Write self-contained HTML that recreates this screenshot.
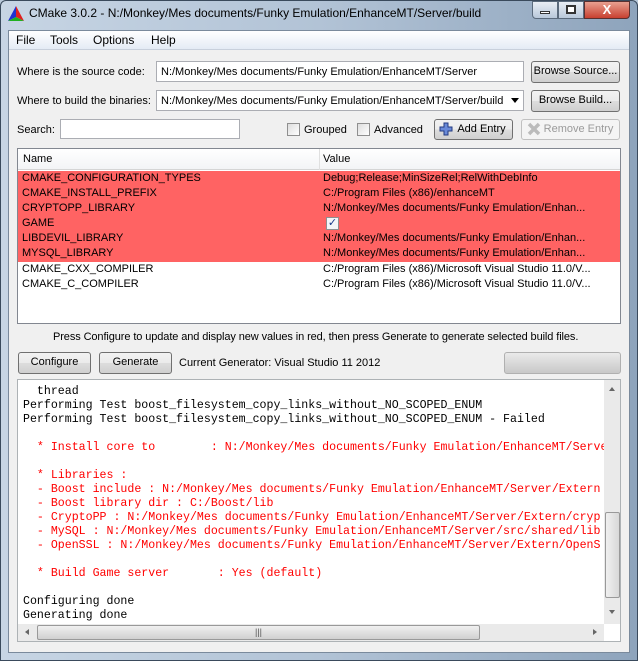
<!DOCTYPE html>
<html><head><meta charset="utf-8"><style>
*{margin:0;padding:0;box-sizing:border-box}
body{width:638px;height:661px;position:relative;overflow:hidden;background:#b9c9da;font-family:"Liberation Sans",sans-serif;font-size:11px;color:#000;white-space:nowrap}
.a{position:absolute}
.frame{left:0;top:0;width:638px;height:661px;background:linear-gradient(90deg,#c7d5e4 0%,#b2c3d6 50%,#8ea4bc 100%);border:1px solid #3a4a5c;border-radius:6px 6px 0 0}
.client{left:8px;top:30px;width:622px;height:623px;background:#f0f0f0;border:1px solid #7a8a9c}
.btn{position:absolute;border:1px solid #707070;border-radius:3px;background:linear-gradient(#f2f2f2,#ebebeb 50%,#dddddd 51%,#cfcfcf);text-align:center;font-size:11px;line-height:19px}
.inp{position:absolute;background:#fff;border:1px solid #abadb3;font-size:11px;line-height:18px;padding-left:4px}
.cb{position:absolute;width:13px;height:13px;border:1px solid #8f8f8f;background:linear-gradient(135deg,#ddd,#fff)}
.row{position:absolute;left:0;width:602px;height:15px;line-height:15px;font-size:11px}
.row span{position:absolute;top:0}
.mono{font-family:"Liberation Mono",monospace;font-size:11.6px;line-height:14px;white-space:pre;position:absolute;left:5px}
.r{color:#f00}
</style></head><body>
<div class="a frame"></div>
<svg class="a" style="left:7px;top:5px" width="18" height="18" viewBox="0 0 18 18"><polygon points="9,1 1,16 9,12" fill="#2030d0"/><polygon points="9,1 17,16 9,12" fill="#e02020"/><polygon points="1,16 17,16 9,12" fill="#20b020"/></svg>
<div class="a" style="left:29px;top:6px;font-size:12px;color:#000">CMake 3.0.2 - N:/Monkey/Mes documents/Funky Emulation/EnhanceMT/Server/build</div>
<div class="a" style="left:532px;top:1px;width:26px;height:18px;border:1px solid #5a6a7c;border-radius:0 0 0 4px;background:linear-gradient(#e8eef5,#b8c8da);"></div>
<div class="a" style="left:540px;top:11px;width:10px;height:3px;background:#fff;border:1px solid #333"></div>
<div class="a" style="left:558px;top:1px;width:26px;height:18px;border:1px solid #5a6a7c;background:linear-gradient(#e8eef5,#b8c8da);"></div>
<div class="a" style="left:566px;top:5px;width:10px;height:9px;border:2px solid #333;background:#fff"></div>
<div class="a" style="left:584px;top:1px;width:46px;height:18px;border:1px solid #5a3030;border-radius:0 0 4px 0;background:linear-gradient(#e8a090,#c84030);color:#fff;font-weight:bold;text-align:center;line-height:16px;font-size:13px">X</div>
<div class="a client"></div>
<div class="a" style="left:9px;top:31px;width:620px;height:19px;background:linear-gradient(#fff,#e4ebf5);border-bottom:1px solid #c8d0dc"></div>
<div class="a" style="left:16px;top:33px;font-size:12px">File</div>
<div class="a" style="left:50px;top:33px;font-size:12px">Tools</div>
<div class="a" style="left:93px;top:33px;font-size:12px">Options</div>
<div class="a" style="left:151px;top:33px;font-size:12px">Help</div>

<div class="a" style="left:17px;top:66px">Where is the source code:</div>
<div class="inp" style="left:156px;top:61px;width:368px;height:21px;padding-top:1px">N:/Monkey/Mes documents/Funky Emulation/EnhanceMT/Server</div>
<div class="btn" style="left:531px;top:61px;width:89px;height:22px">Browse Source...</div>
<div class="a" style="left:17px;top:95px">Where to build the binaries:</div>
<div class="inp" style="left:156px;top:90px;width:368px;height:21px;padding-top:1px">N:/Monkey/Mes documents/Funky Emulation/EnhanceMT/Server/build</div>
<div class="a" style="left:511px;top:98px;width:0;height:0;border-left:4px solid transparent;border-right:4px solid transparent;border-top:5px solid #000"></div>
<div class="btn" style="left:531px;top:90px;width:89px;height:22px">Browse Build...</div>
<div class="a" style="left:17px;top:124px">Search:</div>
<div class="inp" style="left:60px;top:119px;width:180px;height:20px"></div>
<div class="cb" style="left:287px;top:123px"></div><div class="a" style="left:304px;top:124px">Grouped</div>
<div class="cb" style="left:357px;top:123px"></div><div class="a" style="left:374px;top:124px">Advanced</div>
<div class="btn" style="left:434px;top:119px;width:79px;height:21px;padding-left:16px">Add Entry</div>
<svg class="a" style="left:439px;top:122px" width="14" height="14"><path d="M5 1h4v4h4v4h-4v4h-4v-4h-4v-4h4z" fill="#6a8ad8" stroke="#233a80"/></svg>
<div class="btn" style="left:521px;top:119px;width:99px;height:21px;color:#9a9a9a;border-color:#c0c0c0;background:#f4f4f4;padding-left:16px">Remove Entry</div>
<svg class="a" style="left:527px;top:122px" width="14" height="14"><path d="M2 2L12 12M12 2L2 12" stroke="#bbb" stroke-width="3.5"/></svg>

<div class="a" style="left:17px;top:148px;width:604px;height:176px;background:#fff;border:1px solid #828790">
 <div class="a" style="left:0;top:0;width:602px;height:21px;background:linear-gradient(#fff,#f3f4f6);border-bottom:1px solid #d5d5d5"></div>
 <div class="a" style="left:301px;top:0;width:1px;height:21px;background:#e0e0e0"></div>
 <div class="a" style="left:5px;top:4px">Name</div>
 <div class="a" style="left:305px;top:4px">Value</div>
 <div class="a" style="left:0;top:22px;width:602px;height:91px;background:#ff6363"></div>
 <div class="row" style="top:22px"><span style="left:4px">CMAKE_CONFIGURATION_TYPES</span><span style="left:305px">Debug;Release;MinSizeRel;RelWithDebInfo</span></div>
 <div class="row" style="top:37px"><span style="left:4px">CMAKE_INSTALL_PREFIX</span><span style="left:305px">C:/Program Files (x86)/enhanceMT</span></div>
 <div class="row" style="top:52px"><span style="left:4px">CRYPTOPP_LIBRARY</span><span style="left:305px">N:/Monkey/Mes documents/Funky Emulation/Enhan...</span></div>
 <div class="row" style="top:67px"><span style="left:4px">GAME</span></div>
 <div class="cb" style="left:308px;top:68px;background:#f4f6f8;color:#1a3a8a;font-size:11px;line-height:11px;text-align:center">✓</div>
 <div class="row" style="top:82px"><span style="left:4px">LIBDEVIL_LIBRARY</span><span style="left:305px">N:/Monkey/Mes documents/Funky Emulation/Enhan...</span></div>
 <div class="row" style="top:97px"><span style="left:4px">MYSQL_LIBRARY</span><span style="left:305px">N:/Monkey/Mes documents/Funky Emulation/Enhan...</span></div>
 <div class="row" style="top:113px"><span style="left:4px">CMAKE_CXX_COMPILER</span><span style="left:305px">C:/Program Files (x86)/Microsoft Visual Studio 11.0/V...</span></div>
 <div class="row" style="top:128px"><span style="left:4px">CMAKE_C_COMPILER</span><span style="left:305px">C:/Program Files (x86)/Microsoft Visual Studio 11.0/V...</span></div>
</div>
<div class="a" style="left:53px;top:331px;letter-spacing:-0.1px">Press Configure to update and display new values in red, then press Generate to generate selected build files.</div>
<div class="btn" style="left:18px;top:352px;width:73px;height:22px">Configure</div>
<div class="btn" style="left:99px;top:352px;width:73px;height:22px">Generate</div>
<div class="a" style="left:179px;top:357px">Current Generator: Visual Studio 11 2012</div>
<div class="a" style="left:504px;top:352px;width:117px;height:22px;border:1px solid #b0b0b0;border-radius:3px;background:linear-gradient(#eaeaea,#c8c8c8)"></div>

<div class="a" style="left:17px;top:379px;width:604px;height:263px;background:#fff;border:1px solid #adb2b5;overflow:hidden">
<div class="mono" style="top:5px">  thread
Performing Test boost_filesystem_copy_links_without_NO_SCOPED_ENUM
Performing Test boost_filesystem_copy_links_without_NO_SCOPED_ENUM - Failed
<span class="r"> 
  * Install core to        : N:/Monkey/Mes documents/Funky Emulation/EnhanceMT/Server

  * Libraries :
  - Boost include : N:/Monkey/Mes documents/Funky Emulation/EnhanceMT/Server/Extern
  - Boost library dir : C:/Boost/lib
  - CryptoPP : N:/Monkey/Mes documents/Funky Emulation/EnhanceMT/Server/Extern/cryp
  - MySQL : N:/Monkey/Mes documents/Funky Emulation/EnhanceMT/Server/src/shared/lib
  - OpenSSL : N:/Monkey/Mes documents/Funky Emulation/EnhanceMT/Server/Extern/OpenS

  * Build Game server       : Yes (default)
</span>
Configuring done
Generating done</div>
 <div class="a" style="left:586px;top:0;width:17px;height:244px;background:#eaeaea"></div>
 <div class="a" style="left:591px;top:7px;border-left:3px solid transparent;border-right:3px solid transparent;border-bottom:4px solid #666"></div>
 <div class="a" style="left:591px;top:230px;border-left:3px solid transparent;border-right:3px solid transparent;border-top:4px solid #666"></div>
 <div class="a" style="left:587px;top:132px;width:15px;height:86px;border:1px solid #999;border-radius:2px;background:linear-gradient(90deg,#f0f0f0,#d8d8d8)"></div>
 <div class="a" style="left:0;top:244px;width:586px;height:17px;background:#eaeaea"></div>
 <div class="a" style="left:7px;top:249px;border-top:3px solid transparent;border-bottom:3px solid transparent;border-right:4px solid #666"></div>
 <div class="a" style="left:575px;top:249px;border-top:3px solid transparent;border-bottom:3px solid transparent;border-left:4px solid #666"></div>
 <div class="a" style="left:19px;top:245px;width:443px;height:15px;border:1px solid #999;border-radius:2px;background:linear-gradient(#f0f0f0,#d0d0d0);text-align:center;font-size:9px;line-height:13px;color:#555">|||</div>
</div>
</body></html>
